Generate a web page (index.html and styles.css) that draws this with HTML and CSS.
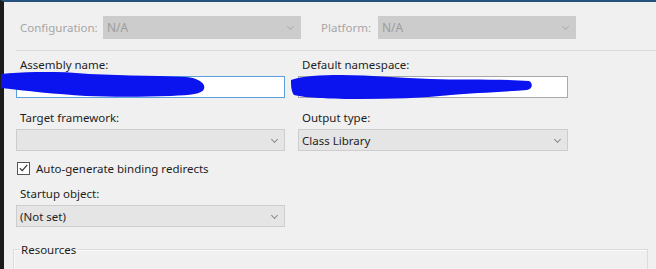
FILE: index.html
```html
<!DOCTYPE html>
<html lang="en">
<head>
    <meta charset="UTF-8">
    <title>Application</title>
    <link rel="stylesheet" href="styles.css">
</head>
<body>

    <div class="window">
        <div class="config-bar">
            <span class="muted-label config-label">Configuration:</span>
            <div class="combo disabled config-combo">N/A<span class="chevron"></span></div>
            <span class="muted-label platform-label">Platform:</span>
            <div class="combo disabled platform-combo">N/A<span class="chevron"></span></div>
        </div>

        <div class="form">
            <div class="field">
                <label>Assembly name:</label>
                <div class="textbox focused">
                    <svg class="scribble scribble-assembly" width="205" height="26" viewBox="0 0 205 26">
                        <path d="M0 2 C20 0 50 -1 75 1 C110 4 150 3 185 5 C198 6 205 12 203 17 C201 22 190 23 170 24 C140 25 110 25 85 24 C55 22 25 19 0 16 Z" fill="#0b13ef"/>
                    </svg>
                </div>
            </div>
            <div class="field">
                <label>Default namespace:</label>
                <div class="textbox">
                    <svg class="scribble scribble-namespace" width="242" height="25" viewBox="0 0 242 25">
                        <path d="M0 5 C10 1 30 0 50 0 C80 0 110 3 140 4 C170 5 210 4 238 6 C242 8 242 14 236 15 C210 17 180 18 160 20 C130 23 100 24 70 24 C40 24 15 23 3 20 C0 16 0 10 0 5 Z" fill="#0b13ef"/>
                    </svg>
                </div>
            </div>

            <div class="field">
                <label>Target framework:</label>
                <div class="combo"><span class="chevron"></span></div>
            </div>
            <div class="field">
                <label>Output type:</label>
                <div class="combo">Class Library<span class="chevron"></span></div>
            </div>

            <div class="check-row">
                <span class="checkbox">
                    <svg width="9" height="8" viewBox="0 0 9 8"><path d="M0.8 4.2 L3.3 6.6 L8.2 0.9" fill="none" stroke="#333" stroke-width="1.2"/></svg>
                </span>
                Auto-generate binding redirects
            </div>

            <div class="field startup">
                <label>Startup object:</label>
                <div class="combo">(Not set)<span class="chevron"></span></div>
            </div>
        </div>

        <fieldset class="resources">
            <legend>Resources</legend>
        </fieldset>
    </div>

</body>
</html>
```

FILE: styles.css
```css
body {
    margin: 0;
    padding: 0;
    height: 100vh;
    overflow: hidden;
    background-color: #f0f0f0;
    font-family: 'Noto Sans', sans-serif;
    font-size: 11.5px;
    color: #1e1e1e;
}

.window {
    display: flex;
    flex-direction: column;
    height: 100vh;
    box-sizing: border-box;
    border-top: 2px solid #24527c;
    border-left: 4px solid #1b1b1b;
}

/* Configuration / Platform bar */
.config-bar {
    display: flex;
    align-items: center;
    margin: 14px 0 0 12px;
    padding-bottom: 11px;
    border-bottom: 1px solid #d9d9d9;
}

.muted-label {
    color: #a6a6a6;
}

.config-label {
    width: 83px;
    padding-left: 4px;
}

.platform-label {
    width: 57px;
    margin-left: 20px;
}

.config-combo,
.platform-combo {
    width: 198px;
}

/* Combos and text boxes */
.combo {
    position: relative;
    height: 22px;
    line-height: 21px;
    padding-left: 3px;
    box-sizing: border-box;
    background-color: #e5e5e5;
    border: 1px solid #cdcdcd;
    color: #1e1e1e;
}

.combo.disabled {
    height: 23px;
    line-height: 22px;
    background-color: #cccccc;
    border-color: #cccccc;
    color: #9c9c9c;
    font-size: 12px;
}

.chevron {
    position: absolute;
    right: 7px;
    top: 7px;
    width: 4px;
    height: 4px;
    border-right: 1px solid #8a8a8a;
    border-bottom: 1px solid #8a8a8a;
    transform: rotate(45deg);
}

.combo.disabled .chevron {
    border-color: #b0b0b0;
}

.textbox {
    position: relative;
    height: 22px;
    box-sizing: border-box;
    background-color: #fff;
    border: 1px solid #a9a9a9;
}

.textbox.focused {
    border-color: #5c9fde;
}

.scribble {
    position: absolute;
    display: block;
}

.scribble-assembly {
    left: -16px;
    top: -5px;
}

.scribble-namespace {
    left: -8px;
    top: -2px;
}

/* Form grid */
.form {
    display: grid;
    grid-template-columns: 269px 270px;
    column-gap: 13px;
    row-gap: 12px;
    margin: 6px 0 0 12px;
}

.field label {
    display: block;
    height: 16px;
    line-height: 16px;
    margin: 0 0 3px 4px;
}

.check-row {
    grid-column: span 2;
    display: flex;
    align-items: center;
    gap: 6px;
    margin: -2px 0 0 1px;
    height: 14px;
}

.checkbox {
    display: flex;
    align-items: center;
    justify-content: center;
    width: 11px;
    height: 11px;
    border: 1px solid #555;
    background-color: #fff;
}

.startup {
    grid-column: 1;
    margin-top: -1px;
}

/* Resources group */
.resources {
    flex: 1;
    margin: 15px 8px 0 9px;
    padding: 0;
    border: 1px solid #dcdcdc;
    border-bottom: none;
    box-shadow: inset 1px 1px 0 #fafafa;
}

.resources legend {
    padding: 0 1px;
    margin-left: 6px;
    color: #1e1e1e;
}
```
